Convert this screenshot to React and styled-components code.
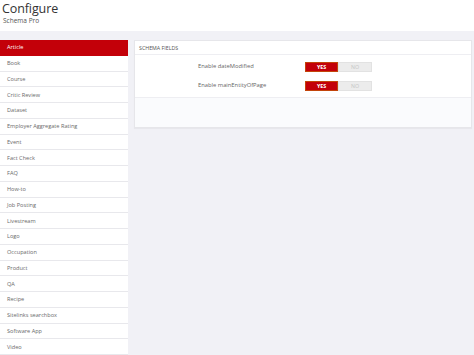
import styled, { createGlobalStyle } from "styled-components";

const GlobalStyle = createGlobalStyle`
  html, body {
    margin: 0;
    padding: 0;
    background: #f1f1f6;
    font-family: "Open Sans", "Liberation Sans", sans-serif;
  }
  * { box-sizing: border-box; }
`;

const Header = styled.header`
  background: #fff;
  height: 31px;
  padding: 1px 2px 0;
`;

const Title = styled.h1`
  margin: 0;
  font-size: 12.5px;
  line-height: 15px;
  font-weight: 400;
  color: #333;
  letter-spacing: -0.1px;
`;

const Subtitle = styled.div`
  margin-top: 1px;
  font-size: 6.5px;
  line-height: 7px;
  color: #555;
  padding-left: 1px;
`;

const Body = styled.div`
  display: flex;
  gap: 6px;
  padding: 9px 2px 0 0;
  align-items: flex-start;
`;

const Sidebar = styled.nav`
  width: 128px;
  flex-shrink: 0;
  background: #fff;
  display: flex;
  flex-direction: column;
`;

const Item = styled.div`
  height: 15.75px;
  display: flex;
  align-items: center;
  padding-left: 7px;
  font-size: 5.6px;
  color: ${(p) => (p.$active ? "#fff" : "#6a6a6a")};
  background: ${(p) => (p.$active ? "#c30009" : "#fff")};
  border-bottom: 1px solid ${(p) => (p.$active ? "#c30009" : "#e8e8ec")};
`;

const Panel = styled.section`
  flex: 1;
  background: #fff;
  border: 1px solid #e6e6ea;
  box-shadow: 0 1px 1px rgba(0, 0, 0, 0.04);
`;

const PanelHead = styled.div`
  height: 14px;
  display: flex;
  align-items: center;
  padding-left: 4px;
  font-size: 5.3px;
  color: #555;
  text-transform: uppercase;
  border-bottom: 1px solid #eeeef2;
`;

const Fields = styled.div`
  padding: 7px 0 6px 63px;
  display: flex;
  flex-direction: column;
  gap: 9px;
`;

const Field = styled.div`
  display: flex;
  align-items: center;
  height: 10px;
`;

const Label = styled.div`
  width: 107px;
  font-size: 5.8px;
  color: #666;
  margin-top: -3px;
`;

const Toggle = styled.div`
  display: flex;
  height: 10px;
`;

const Opt = styled.div`
  width: ${(p) => (p.$on ? "33px" : "34px")};
  display: flex;
  align-items: center;
  justify-content: center;
  font-size: 5.3px;
  font-weight: ${(p) => (p.$on ? 700 : 400)};
  color: ${(p) => (p.$on ? "#fff" : "#c4c4c4")};
  background: ${(p) => (p.$on ? "#c30009" : "#ececec")};
  border: 1px solid ${(p) => (p.$on ? "#c3440a" : "#e2e2e2")};
`;

const Footer = styled.div`
  height: 30px;
  background: #fafbfd;
  border-top: 1px solid #eeeef2;
`;

const types = [
  "Article",
  "Book",
  "Course",
  "Critic Review",
  "Dataset",
  "Employer Aggregate Rating",
  "Event",
  "Fact Check",
  "FAQ",
  "How-to",
  "Job Posting",
  "Livestream",
  "Logo",
  "Occupation",
  "Product",
  "QA",
  "Recipe",
  "Sitelinks searchbox",
  "Software App",
  "Video",
];

const fields = ["Enable dateModified", "Enable mainEntityOfPage"];

export default function App() {
  return (
    <>
      <GlobalStyle />
      <Header>
        <Title>Configure</Title>
        <Subtitle>Schema Pro</Subtitle>
      </Header>
      <Body>
        <Sidebar>
          {types.map((t, i) => (
            <Item key={t} $active={i === 0}>
              {t}
            </Item>
          ))}
        </Sidebar>
        <Panel>
          <PanelHead>Schema Fields</PanelHead>
          <Fields>
            {fields.map((f) => (
              <Field key={f}>
                <Label>{f}</Label>
                <Toggle>
                  <Opt $on>YES</Opt>
                  <Opt>NO</Opt>
                </Toggle>
              </Field>
            ))}
          </Fields>
          <Footer />
        </Panel>
      </Body>
    </>
  );
}
